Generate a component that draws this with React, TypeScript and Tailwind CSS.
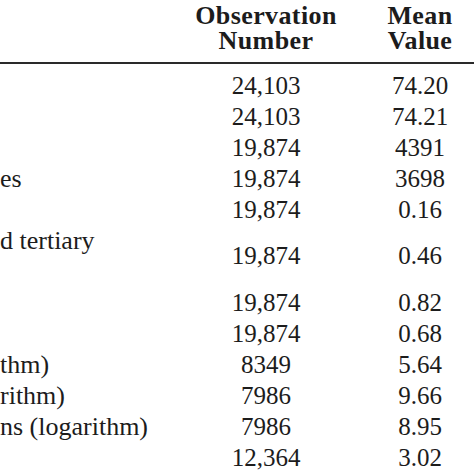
import React from "react";

interface Row {
  label: string;
  obs: string;
  mean: string;
  tall?: boolean;
}

const rows: Row[] = [
  { label: "", obs: "24,103", mean: "74.20" },
  { label: "", obs: "24,103", mean: "74.21" },
  { label: "", obs: "19,874", mean: "4391" },
  { label: "es", obs: "19,874", mean: "3698" },
  { label: "", obs: "19,874", mean: "0.16" },
  { label: "d tertiary", obs: "19,874", mean: "0.46", tall: true },
  { label: "", obs: "19,874", mean: "0.82" },
  { label: "", obs: "19,874", mean: "0.68" },
  { label: "thm)", obs: "8349", mean: "5.64" },
  { label: "rithm)", obs: "7986", mean: "9.66" },
  { label: "ns (logarithm)", obs: "7986", mean: "8.95" },
  { label: "", obs: "12,364", mean: "3.02" },
];

const App: React.FC = () => {
  return (
    <div
      className="w-[474px] h-[474px] overflow-hidden bg-white text-[#1c1c1c]"
      style={{ fontFamily: '"Liberation Serif", "Times New Roman", serif' }}
    >
      {/* header */}
      <div className="grid grid-cols-[190px_152px_132px] pt-[3px] pb-[9px] text-[26px] font-bold leading-[25px] tracking-[0.4px]">
        <div />
        <div className="flex flex-col items-center whitespace-nowrap">
          <span>Observation</span>
          <span>Number</span>
        </div>
        <div className="flex flex-col items-center whitespace-nowrap pl-[24px]">
          <span>Mean</span>
          <span>Value</span>
        </div>
      </div>
      <div className="h-[1.5px] w-full bg-[#2a2a2a]" />

      {/* body */}
      <div className="flex flex-col pt-[6px]">
        {rows.map((row, i) => (
          <div
            key={i}
            className={`grid grid-cols-[190px_152px_132px] ${
              row.tall ? "h-[62px]" : "h-[31px]"
            }`}
          >
            <div className="text-[26px] leading-[31px] whitespace-nowrap">
              {row.label}
            </div>
            <div className="flex items-center justify-center text-[25px] leading-[31px]">
              {row.obs}
            </div>
            <div className="flex items-center justify-center pl-[24px] text-[25px] leading-[31px]">
              {row.mean}
            </div>
          </div>
        ))}
      </div>
    </div>
  );
};

export default App;
